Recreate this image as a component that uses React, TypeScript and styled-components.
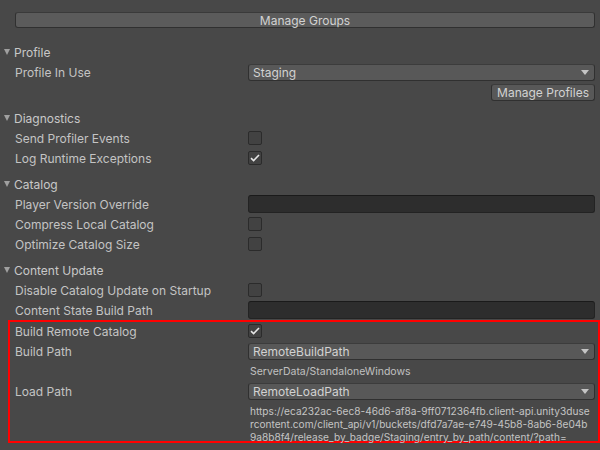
import React from "react";
import styled, { createGlobalStyle } from "styled-components";

const Global = createGlobalStyle`
  html, body { margin: 0; padding: 0; background: #484848; }
  body { font-family: Inter, "Noto Sans", sans-serif; color: #c4c4c4; font-size: 12px; }
`;

const Page = styled.div`
  width: 600px;
  height: 450px;
  box-sizing: border-box;
  padding: 12px 5px 0 0;
  overflow: hidden;
  background: #484848;
`;

const WideButton = styled.div`
  margin-left: 15px;
  height: 16px;
  box-sizing: border-box;
  background: #5b5b5b;
  border: 1px solid #303030;
  border-top-color: #3a3a3a;
  border-radius: 3px;
  display: flex;
  align-items: center;
  justify-content: center;
  color: #d2d2d2;
  font-size: 12px;
`;

const Section = styled.div<{ $first?: boolean }>`
  margin-top: ${(p) => (p.$first ? "14px" : "6px")};
`;

const Header = styled.div`
  height: 20px;
  display: flex;
  align-items: center;
  gap: 4px;
  padding-left: 4px;
  color: #c8c8c8;
`;

const Tri = styled.span`
  width: 0;
  height: 0;
  border-left: 3.5px solid transparent;
  border-right: 3.5px solid transparent;
  border-top: 6px solid #a0a0a0;
`;

const Row = styled.div<{ $h?: number }>`
  display: grid;
  grid-template-columns: 233px 1fr;
  height: ${(p) => p.$h ?? 20}px;
  align-items: center;
  padding-left: 15px;
`;

const Label = styled.span`
  color: #c4c4c4;
  white-space: nowrap;
`;

const Box = styled.div`
  width: 14px;
  height: 14px;
  box-sizing: border-box;
  background: #424242;
  border: 1px solid #2b2b2b;
  border-radius: 2px;
  display: flex;
  align-items: center;
  justify-content: center;
`;

const Field = styled.div`
  height: 18px;
  box-sizing: border-box;
  background: #2d2d2d;
  border: 1px solid #232323;
  border-top-color: #1a1a1a;
  border-radius: 3px;
`;

const Dropdown = styled.div`
  height: 17px;
  box-sizing: border-box;
  background: #585858;
  border: 1px solid #303030;
  border-top-color: #3c3c3c;
  border-radius: 3px;
  display: flex;
  align-items: center;
  justify-content: space-between;
  padding: 0 5px 0 4px;
  color: #d2d2d2;
`;

const Arrow = styled.span`
  width: 0;
  height: 0;
  border-left: 4px solid transparent;
  border-right: 4px solid transparent;
  border-top: 5px solid #c4c4c4;
`;

const RightRow = styled.div`
  display: flex;
  justify-content: flex-end;
  height: 20px;
  align-items: center;
`;

const SmallButton = styled.div`
  height: 17px;
  box-sizing: border-box;
  padding: 0 5px;
  background: #585858;
  border: 1px solid #303030;
  border-top-color: #3c3c3c;
  border-radius: 3px;
  display: flex;
  align-items: center;
  color: #d2d2d2;
`;

const Highlight = styled.div`
  margin: 0 -5px 0 8px;
  border: 2px solid #ff0000;
  padding: 0 3px 0 5px;
  height: 123px;
  box-sizing: border-box;
  & > :first-child { margin-top: -1px; }
`;

const InnerRow = styled(Row)`
  padding-left: 0;
`;

const Note = styled.div`
  font-size: 10.5px;
  color: #c0c0c0;
  padding-left: 2px;
  white-space: nowrap;
`;

const Url = styled.div`
  margin-left: 235px;
  padding-top: 4px;
  font-size: 10.15px;
  line-height: 13px;
  color: #c4c4c4;
  span { display: block; white-space: nowrap; }
`;

const Check = () => (
  <svg width="10" height="8" viewBox="0 0 10 8">
    <path d="M1 4.2 L3.6 6.6 L9 1" stroke="#e6e6e6" strokeWidth="1.6" fill="none" />
  </svg>
);

const CheckBox = ({ on }: { on?: boolean }) => <Box>{on && <Check />}</Box>;

export default function App() {
  return (
    <Page>
      <Global />
      <WideButton>Manage Groups</WideButton>

      <Section $first>
        <Header><Tri />Profile</Header>
        <Row>
          <Label>Profile In Use</Label>
          <Dropdown>Staging<Arrow /></Dropdown>
        </Row>
        <RightRow><SmallButton>Manage Profiles</SmallButton></RightRow>
      </Section>

      <Section>
        <Header><Tri />Diagnostics</Header>
        <Row><Label>Send Profiler Events</Label><CheckBox /></Row>
        <Row><Label>Log Runtime Exceptions</Label><CheckBox on /></Row>
      </Section>

      <Section>
        <Header><Tri />Catalog</Header>
        <Row><Label>Player Version Override</Label><Field /></Row>
        <Row><Label>Compress Local Catalog</Label><CheckBox /></Row>
        <Row><Label>Optimize Catalog Size</Label><CheckBox /></Row>
      </Section>

      <Section>
        <Header><Tri />Content Update</Header>
        <Row><Label>Disable Catalog Update on Startup</Label><CheckBox /></Row>
        <Row><Label>Content State Build Path</Label><Field /></Row>
        <Highlight>
          <InnerRow><Label>Build Remote Catalog</Label><CheckBox on /></InnerRow>
          <InnerRow>
            <Label>Build Path</Label>
            <Dropdown>RemoteBuildPath<Arrow /></Dropdown>
          </InnerRow>
          <InnerRow><span /><Note>ServerData/StandaloneWindows</Note></InnerRow>
          <InnerRow>
            <Label>Load Path</Label>
            <Dropdown>RemoteLoadPath<Arrow /></Dropdown>
          </InnerRow>
          <Url>
            <span>https://eca232ac-6ec8-46d6-af8a-9ff0712364fb.client-api.unity3duse</span>
            <span>rcontent.com/client_api/v1/buckets/dfd7a7ae-e749-45b8-8ab6-8e04b</span>
            <span>9a8b8f4/release_by_badge/Staging/entry_by_path/content/?path=</span>
          </Url>
        </Highlight>
      </Section>
    </Page>
  );
}
